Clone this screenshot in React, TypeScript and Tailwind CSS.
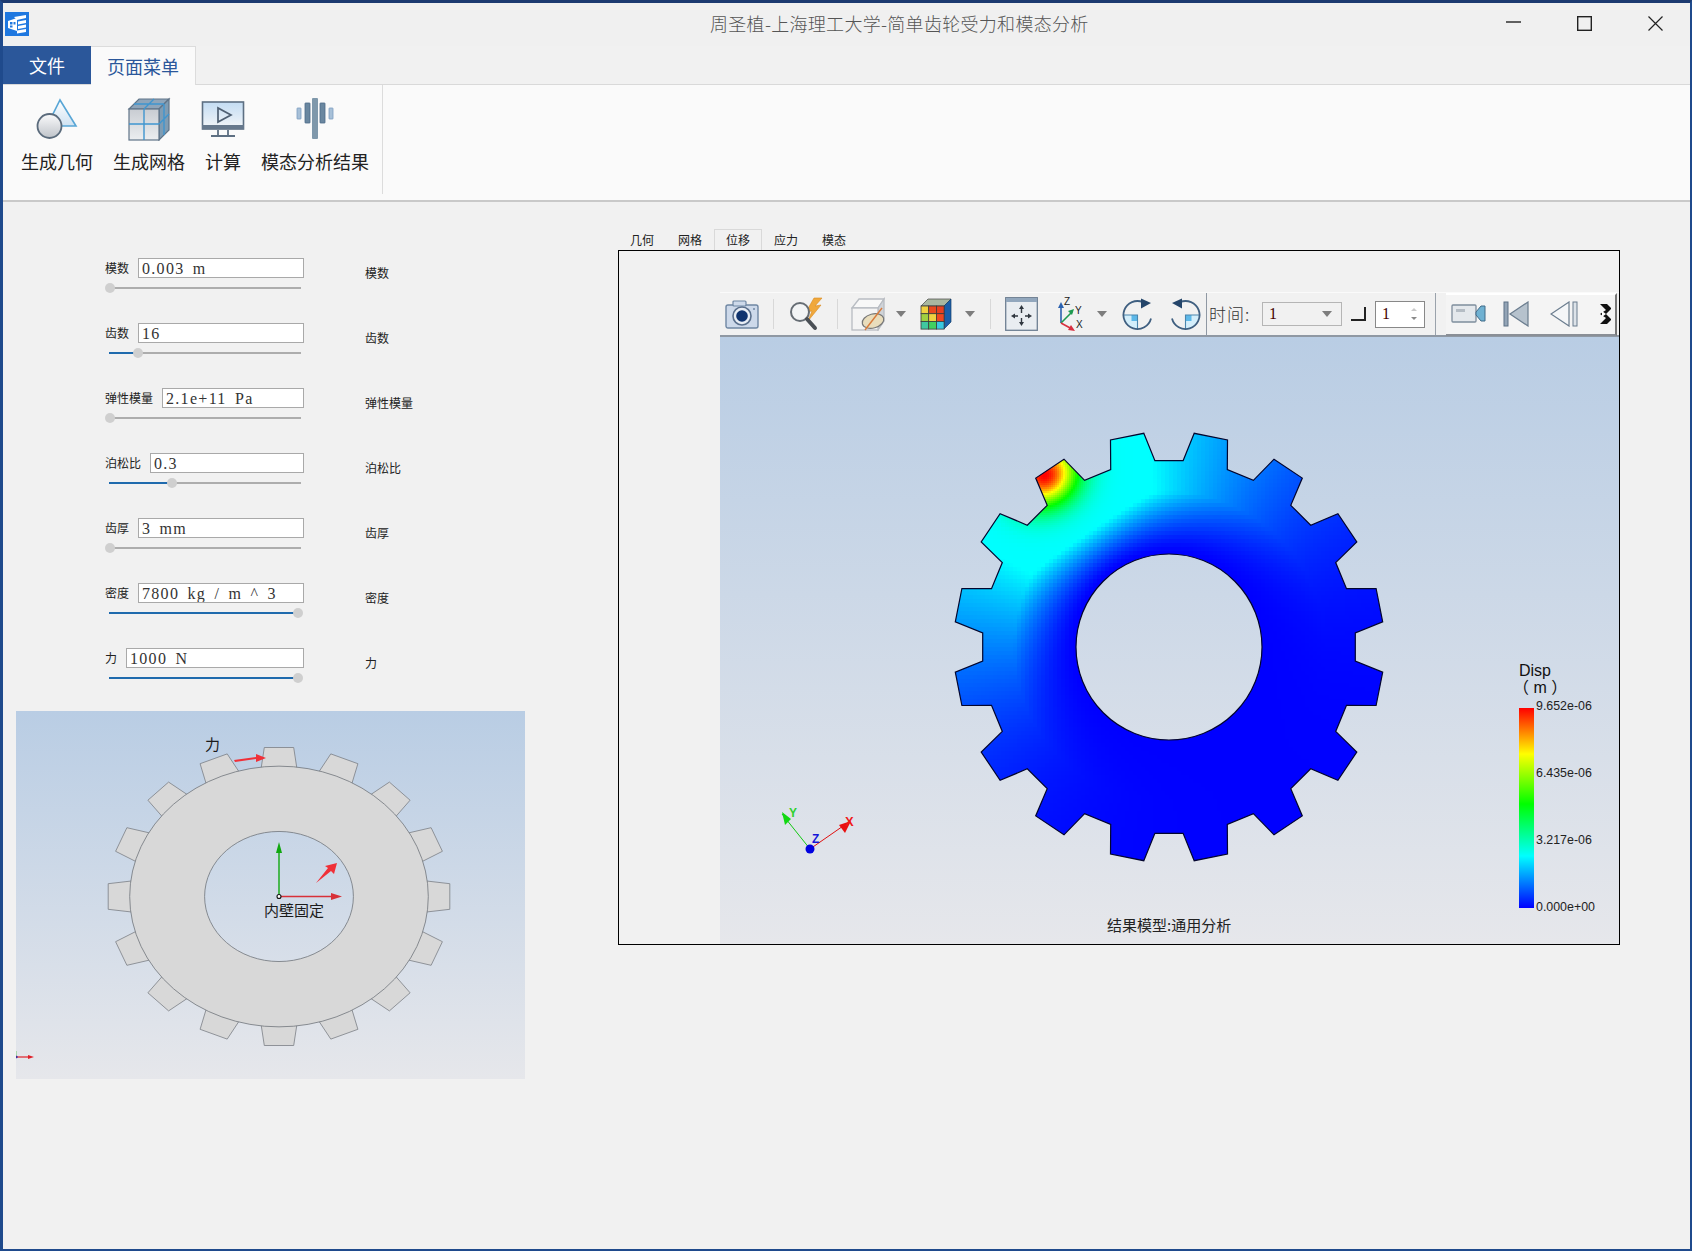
import React, { useMemo } from "react";

const clamp = (v: number, a: number, b: number) => Math.max(a, Math.min(b, v));
const STOPS: [number, number[]][] = [
  [0, [0, 0, 255]],
  [0.26, [0, 255, 255]],
  [0.52, [0, 255, 0]],
  [0.77, [255, 255, 0]],
  [1, [255, 0, 0]],
];
function jet(v: number) {
  const t = clamp(v, 0, 1);
  for (let i = 1; i < STOPS.length; i++) {
    if (t <= STOPS[i][0]) {
      const [a, ca] = STOPS[i - 1];
      const [b, cb] = STOPS[i];
      const k = (t - a) / (b - a);
      const c = ca.map((x, j) => Math.round(x + (cb[j] - x) * k));
      return `rgb(${c[0]},${c[1]},${c[2]})`;
    }
  }
  return "rgb(255,0,0)";
}
function field(dx: number, dy: number) {
  const r = Math.hypot(dx, dy);
  const ang = (Math.atan2(-dx, -dy) * 180) / Math.PI;
  let d = Math.abs(ang - 33.75);
  if (d > 180) d = 360 - d;
  const ring = 0.28 * Math.exp(-Math.pow(d / 65, 2)) + 0.1 * Math.exp(-Math.pow(d / 25, 2));
  const f = Math.pow(clamp((r - 95) / 60, 0, 1), 1.3);
  const base = Math.min(ring * f, 0.26);
  const a = dx * -0.556 + dy * -0.831;
  const b = dx * 0.831 + dy * -0.556;
  const hot = 0.74 * Math.exp(-Math.pow((a - 212) / 30, 2) - Math.pow((b + 8) / 34, 2));
  return base + hot;
}
function tooth(cx: number, cy: number, aDeg: number, rr: number, rt: number, hr: number, ht: number, sx = 1) {
  const a = (aDeg * Math.PI) / 180;
  const d = [Math.sin(a), -Math.cos(a)];
  const t = [Math.cos(a), Math.sin(a)];
  const p = (r: number, h: number) => [cx + (r * d[0] + h * t[0]) * sx, cy + r * d[1] + h * t[1]];
  return [p(rr, -hr), p(rt, -ht), p(rt, ht), p(rr, hr)];
}
const fmt = (p: number[]) => `${p[0].toFixed(1)} ${p[1].toFixed(1)}`;

function ResultGear() {
  const cx = 449;
  const cy = 310;
  const path = useMemo(() => {
    let d = "";
    for (let k = 0; k < 16; k++) {
      const pts = tooth(cx, cy, 11.25 + 22.5 * k, 185.5, 214.5, 22.5, 17);
      d += (k === 0 ? "M" : "L") + pts.map(fmt).join("L");
    }
    d += `Z M${cx + 93} ${cy} A93 93 0 1 0 ${cx - 93} ${cy} A93 93 0 1 0 ${cx + 93} ${cy}Z`;
    return d;
  }, []);
  const cells = useMemo(() => {
    const out: React.ReactElement[] = [];
    for (let x = -220; x < 220; x += 4) {
      for (let y = -220; y < 220; y += 4) {
        const rr = Math.hypot(x + 2, y + 2);
        if (rr < 86 || rr > 224) continue;
        const hot = Math.hypot(x + 118, y + 176) < 70;
        if (hot) {
          for (let i = 0; i < 2; i++)
            for (let j = 0; j < 2; j++) {
              const px = x + i * 2;
              const py = y + j * 2;
              out.push(<rect key={`${px},${py}`} x={cx + px} y={cy + py} width={2} height={2} fill={jet(field(px + 1, py + 1))} />);
            }
        } else {
          out.push(<rect key={`${x},${y}`} x={cx + x} y={cy + y} width={4} height={4} fill={jet(field(x + 2, y + 2))} />);
        }
      }
    }
    return out;
  }, []);
  return (
    <svg className="absolute inset-0" width={899} height={606} viewBox="0 0 899 606">
      <defs>
        <clipPath id="gearClip">
          <path d={path} clipRule="evenodd" />
        </clipPath>
        <linearGradient id="legend" x1="0" y1="0" x2="0" y2="1">
          <stop offset="0" stopColor="#ff0000" />
          <stop offset="0.23" stopColor="#ffff00" />
          <stop offset="0.48" stopColor="#00ff00" />
          <stop offset="0.74" stopColor="#00ffff" />
          <stop offset="1" stopColor="#0000ff" />
        </linearGradient>
      </defs>
      <g clipPath="url(#gearClip)" shapeRendering="crispEdges">
        {cells}
      </g>
      <path d={path} fill="none" stroke="#03052e" strokeWidth="1.2" fillRule="evenodd" />
      {/* triad */}
      <line x1="90" y1="512" x2="62" y2="477" stroke="#12c812" strokeWidth="1" />
      <polygon points="62,475 71,482 65,488" fill="#12d812" />
      <line x1="90" y1="512" x2="126" y2="487" stroke="#e01010" strokeWidth="1" />
      <polygon points="131,484 125,496 119,488" fill="#e81010" />
      <circle cx="90" cy="512" r="4.5" fill="#0000e0" />
      <text x="69" y="480" fontSize="12" fontWeight="700" fill="#30d030" fontFamily="Liberation Sans">Y</text>
      <text x="125" y="489" fontSize="13" fontWeight="700" fill="#f01818" fontFamily="Liberation Sans">X</text>
      <text x="92" y="506" fontSize="12" fontWeight="700" fill="#1515d8" fontFamily="Liberation Sans">Z</text>
      {/* legend */}
      <text x="799" y="339" fontSize="16" fill="#111" fontFamily="Liberation Sans">Disp</text>
      <text x="793" y="356" fontSize="16" fill="#111" fontFamily="Liberation Sans, Noto Sans CJK SC">（ m ）</text>
      <rect x="799" y="371" width="15" height="200" fill="url(#legend)" />
      <g fontSize="12.4" fill="#222" fontFamily="Liberation Sans">
        <text x="816" y="373">9.652e-06</text>
        <text x="816" y="440">6.435e-06</text>
        <text x="816" y="507">3.217e-06</text>
        <text x="816" y="574">0.000e+00</text>
      </g>
    </svg>
  );
}

function SketchGear() {
  const cx = 263;
  const cy = 185.5;
  const sx = 1.146;
  const teeth = useMemo(
    () =>
      Array.from({ length: 16 }, (_, k) =>
        tooth(cx, cy, 22.5 * k, 128, 149, 15.6, 12.8, sx).map((p) => p.map((n) => n.toFixed(1)).join(",")).join(" ")
      ),
    []
  );
  const ring = `M${cx + 149.3} ${cy}A149.3 130.3 0 1 0 ${cx - 149.3} ${cy}A149.3 130.3 0 1 0 ${cx + 149.3} ${cy}Z
  M${cx + 74.4} ${cy}A74.4 65 0 1 0 ${cx - 74.4} ${cy}A74.4 65 0 1 0 ${cx + 74.4} ${cy}Z`;
  return (
    <svg className="absolute inset-0" width={509} height={368} viewBox="0 0 509 368">
      {teeth.map((p, i) => (
        <polygon key={i} points={p} fill="#d8d8d8" stroke="#7b7f85" strokeWidth="0.8" />
      ))}
      <path d={ring} fill="#d8d8d8" fillRule="evenodd" stroke="#70757b" strokeWidth="0.8" />
      <polygon points="218,49 240,46 240,43 250,47 240,51 240,48 219,51" fill="#f03038" />
      <line x1="263" y1="185.5" x2="263" y2="136" stroke="#10a810" strokeWidth="1.4" />
      <polygon points="263,131 266,142 260,142" fill="#10a810" />
      <line x1="263" y1="185.5" x2="318" y2="185.5" stroke="#d83038" strokeWidth="1.4" />
      <polygon points="326,185.5 315,189 315,182" fill="#d83038" />
      <polygon points="300,172 312,157 309,155 321,152 318,163 315,160" fill="#f03038" />
      <circle cx="263" cy="185.5" r="2" fill="#fff" stroke="#111" strokeWidth="1.1" />
      <line x1="0" y1="346" x2="14" y2="346" stroke="#e02028" strokeWidth="1.2" />
      <polygon points="18,346 12,348 12,344" fill="#e02028" />
      <line x1="0.5" y1="340" x2="0.5" y2="345" stroke="#9bd49b" strokeWidth="0.8" />
      <circle cx="0.5" cy="346" r="1.2" fill="#4030a0" />
      <text x="189" y="39" fontSize="15" fill="#1b1b1b" fontFamily="Noto Sans CJK SC">力</text>
      <text x="248" y="205" fontSize="15" fill="#1b1b1b" fontFamily="Noto Sans CJK SC">内壁固定</text>
    </svg>
  );
}

function ShapeIcon() {
  return (
    <svg width="42" height="42" viewBox="0 0 42 42">
      <defs>
        <linearGradient id="sg" x1="0" y1="0" x2="0" y2="1">
          <stop offset="0" stopColor="#fbfbfc" />
          <stop offset="1" stopColor="#bfc3c9" />
        </linearGradient>
        <linearGradient id="tg" x1="0" y1="0" x2="0" y2="1">
          <stop offset="0" stopColor="#ffffff" />
          <stop offset="1" stopColor="#cfe2f2" />
        </linearGradient>
      </defs>
      <polygon points="24,2 40,28 11,28" fill="url(#tg)" stroke="#58a6d6" strokeWidth="1.6" />
      <circle cx="13.5" cy="28" r="12" fill="url(#sg)" stroke="#5b6b7c" strokeWidth="1.8" />
    </svg>
  );
}
function MeshIcon() {
  return (
    <svg width="44" height="44" viewBox="0 0 44 44">
      <defs>
        <linearGradient id="mg" x1="0" y1="0" x2="0" y2="1">
          <stop offset="0" stopColor="#c8ccd2" />
          <stop offset="1" stopColor="#eceef0" />
        </linearGradient>
      </defs>
      <polygon points="2,12 12,2 42,2 32,12" fill="#8ea5ba" stroke="#607488" strokeWidth="1.2" />
      <polygon points="32,12 42,2 42,33 32,43" fill="#7f9cb3" stroke="#607488" strokeWidth="1.2" />
      <rect x="2" y="12" width="30" height="31" fill="url(#mg)" stroke="#607488" strokeWidth="1.2" />
      <path d="M17 12V43M2 27H32M27 2L17 12M7 7H37M32 27L42 17M37 7V38" stroke="#3f95cf" strokeWidth="1.4" fill="none" />
    </svg>
  );
}
function MonitorIcon() {
  return (
    <svg width="44" height="44" viewBox="0 0 44 44" className="shrink-0">
      <defs>
        <linearGradient id="mon" x1="0" y1="0" x2="0" y2="1">
          <stop offset="0" stopColor="#c3dcf3" />
          <stop offset="1" stopColor="#f4f6f8" />
        </linearGradient>
      </defs>
      <rect x="1.5" y="5" width="41" height="27" fill="url(#mon)" stroke="#5d6f82" strokeWidth="1.6" />
      <rect x="1" y="28" width="42" height="4" fill="#66788c" />
      <polygon points="17,11 17,25 30,18" fill="none" stroke="#4e5f72" strokeWidth="1.7" />
      <path d="M17 33V38M27 33V38M10 39H34" stroke="#5d6f82" strokeWidth="1.8" fill="none" />
    </svg>
  );
}
function ModalIcon() {
  return (
    <svg width="38" height="44" viewBox="0 0 38 44">
      <rect x="16" y="1" width="6" height="41" rx="1" fill="#7f98ab" />
      <rect x="9" y="6" width="5" height="20" rx="0.5" fill="#6a87a0" stroke="#4d6a88" strokeWidth="0.8" />
      <rect x="24" y="6" width="5" height="20" rx="0.5" fill="#6a87a0" stroke="#4d6a88" strokeWidth="0.8" />
      <rect x="1" y="11" width="4" height="11" rx="0.5" fill="#a7c0d8" stroke="#7c9dc0" strokeWidth="0.8" />
      <rect x="33" y="11" width="4" height="11" rx="0.5" fill="#a7c0d8" stroke="#7c9dc0" strokeWidth="0.8" />
    </svg>
  );
}

function Caret({ className }: { className: string }) {
  return (
    <svg width="10" height="6" viewBox="0 0 10 6" className={className}>
      <polygon points="0,0 10,0 5,6" fill="#7d7d7d" />
    </svg>
  );
}
function Sep({ className }: { className: string }) {
  return <div className={`w-px h-[30px] bg-[#d8d8d8] shrink-0 ${className}`} />;
}

function CameraIcon() {
  return (
    <svg width="34" height="30" viewBox="0 0 34 30" className="ml-[5px] shrink-0">
      <rect x="1" y="6" width="32" height="23" rx="2" fill="#cdd9ea" stroke="#6f87a3" strokeWidth="1.4" />
      <rect x="8" y="2" width="13" height="5" rx="1" fill="#cdd9ea" stroke="#6f87a3" strokeWidth="1.2" />
      <circle cx="17" cy="17" r="9" fill="#e9eef5" stroke="#5a6f8c" strokeWidth="1.6" />
      <circle cx="17" cy="17" r="5.8" fill="#10336e" />
      <circle cx="29" cy="10" r="1" fill="#6f87a3" />
    </svg>
  );
}
function SearchBolt() {
  return (
    <svg width="36" height="34" viewBox="0 0 36 34" className="ml-[14px] shrink-0">
      <polygon points="26,1 18,15 24,14 20,24 33,8 27,9 34,1" fill="#f0a83c" stroke="#d88a20" strokeWidth="0.6" />
      <circle cx="12" cy="15" r="9" fill="#f2f4f5" stroke="#666d74" strokeWidth="2" />
      <line x1="19" y1="22" x2="27" y2="31" stroke="#4a4f55" strokeWidth="4" strokeLinecap="round" />
    </svg>
  );
}
function HideCube() {
  return (
    <svg width="35" height="34" viewBox="0 0 35 34" className="ml-[13px] shrink-0">
      <polygon points="1,11 8,2 33,2 27,11" fill="#f8f8f8" stroke="#b8bcc2" strokeWidth="1.3" />
      <polygon points="27,11 33,2 33,24 27,33" fill="#cfd3d8" stroke="#b8bcc2" strokeWidth="1.3" />
      <rect x="1" y="11" width="26" height="22" fill="#f4f4f4" stroke="#b8bcc2" strokeWidth="1.3" />
      <ellipse cx="22" cy="24" rx="11" ry="7" fill="#e9ddbc" stroke="#777" strokeWidth="1.2" transform="rotate(-15 22 24)" />
      <line x1="14" y1="33" x2="31" y2="11" stroke="#d87a3a" strokeWidth="1.4" />
    </svg>
  );
}
function ColorCube() {
  const cols = ["#f0d040", "#e84a20", "#e84020", "#a0d040", "#f0d040", "#f04820", "#40c8a0", "#40d060", "#38c8e0"];
  return (
    <svg width="32" height="32" viewBox="0 0 32 32" className="ml-[14px] shrink-0">
      <polygon points="1,8 8,1 31,1 24,8" fill="#a9b7a0" stroke="#444" strokeWidth="0.7" />
      <polygon points="24,8 31,1 31,24 24,31" fill="#1c5fa8" stroke="#15406c" strokeWidth="0.7" />
      {cols.map((c, i) => (
        <rect key={i} x={1 + (i % 3) * 7.7} y={8 + Math.floor(i / 3) * 7.7} width="7.7" height="7.7" fill={c} stroke="#3a3a3a" strokeWidth="0.8" />
      ))}
    </svg>
  );
}
function FitIcon() {
  return (
    <svg width="33" height="34" viewBox="0 0 33 34" className="ml-[14px] shrink-0">
      <rect x="0.7" y="0.7" width="31.6" height="32.6" fill="#e9edf1" stroke="#6e7f92" strokeWidth="1.3" />
      <rect x="1" y="1" width="31" height="4" fill="#92a7bd" />
      <path d="M16.5 11V16M16.5 21V27M8 19H13M20 19H25" stroke="#30373f" strokeWidth="1.4" />
      <polygon points="16.5,8 14,12 19,12" fill="#30373f" />
      <polygon points="16.5,29 14,25 19,25" fill="#30373f" />
      <polygon points="6,19 10,16.5 10,21.5" fill="#30373f" />
      <polygon points="27,19 23,16.5 23,21.5" fill="#30373f" />
    </svg>
  );
}
function AxesIcon() {
  return (
    <svg width="27" height="36" viewBox="0 0 27 36" className="ml-[19px] shrink-0">
      <line x1="4" y1="27" x2="4" y2="9" stroke="#2c62b0" strokeWidth="1.6" />
      <polygon points="4,6 1,12 7,12" fill="#2c62b0" />
      <line x1="4" y1="27" x2="15" y2="16" stroke="#1f9a50" strokeWidth="1.6" />
      <polygon points="17,13 11,15 15,19" fill="#1f9a50" />
      <line x1="4" y1="27" x2="15" y2="33" stroke="#d83040" strokeWidth="1.6" />
      <polygon points="18,35 11,34 14,29" fill="#d83040" />
      <g fontSize="10" fill="#222" fontFamily="Liberation Sans">
        <text x="7" y="9">Z</text>
        <text x="18" y="18">Y</text>
        <text x="19" y="32">X</text>
      </g>
    </svg>
  );
}
function RotateIcon({ flip, className }: { flip?: boolean; className: string }) {
  return (
    <svg width="31" height="32" viewBox="0 0 31 32" className={`${className} shrink-0`}>
      <g transform={flip ? "translate(31 0) scale(-1 1)" : undefined}>
        <path d="M15.5 17H1.5A14 14 0 0 0 15.5 31Z" fill="#d3eefb" />
        <rect x="9.5" y="17" width="6" height="6" fill="#5db8e8" />
        <path d="M1.5 17H15.5V31" fill="none" stroke="#4a86ad" strokeWidth="1.1" />
        <path d="M21 4.2A14 14 0 1 0 29 20.5" fill="none" stroke="#3f5f80" strokeWidth="1.8" />
        <polygon points="29,5 19,0.5 19,10.5" fill="#24456a" />
      </g>
    </svg>
  );
}
function VideoIcon() {
  return (
    <svg width="35" height="22" viewBox="0 0 35 22" className="ml-[5px] shrink-0">
      <rect x="1" y="2" width="24" height="17" rx="1" fill="#e4e8ec" stroke="#7e8d9c" strokeWidth="1.3" />
      <rect x="5" y="6" width="9" height="3" fill="#b4bcc4" />
      <polygon points="25,9 30,3 34,3 34,18 30,18 25,12" fill="#6fb1d2" stroke="#406a88" strokeWidth="1" />
    </svg>
  );
}
function FirstIcon() {
  return (
    <svg width="26" height="26" viewBox="0 0 26 26" className="ml-[17px] shrink-0">
      <rect x="1" y="1" width="4" height="24" fill="#93a4b6" stroke="#5c7085" strokeWidth="1" />
      <polygon points="25,1 7,13 25,25" fill="#b6c2cd" stroke="#6a7c8e" strokeWidth="1.2" />
    </svg>
  );
}
function PrevIcon() {
  return (
    <svg width="28" height="26" viewBox="0 0 28 26" className="ml-[21px] shrink-0">
      <polygon points="19,1 1,13 19,25" fill="#f4f6f8" stroke="#6a7c8e" strokeWidth="1.2" />
      <rect x="23" y="1" width="4" height="24" fill="#dde3e9" stroke="#6a7c8e" strokeWidth="1" />
    </svg>
  );
}
function NextCut() {
  return (
    <svg width="17" height="24" viewBox="0 0 17 24" className="ml-[21px] shrink-0">
      <path d="M1 2L8 2L12 6V7L7 12L12 17V18L8 22H1L7 16L1 12L7 8Z" fill="#111" />
      <path d="M3 9L7 12L3 15Z" fill="#fff" />
    </svg>
  );
}

const ROWS = [
  { label: "模数", value: "0.003 m", pct: -1 },
  { label: "齿数", value: "16", pct: 138 },
  { label: "弹性模量", value: "2.1e+11 Pa", pct: -1 },
  { label: "泊松比", value: "0.3", pct: 172 },
  { label: "齿厚", value: "3 mm", pct: -1 },
  { label: "密度", value: "7800 kg / m ^ 3", pct: 298 },
  { label: "力", value: "1000 N", pct: 298 },
];

function FormRow({ label, value, pct }: { label: string; value: string; pct: number }) {
  const thumb = pct < 0 ? 1 : pct - 109;
  return (
    <div className="flex items-start h-[65px]">
      <div className="w-[199px] shrink-0">
        <div className="flex items-center h-[20px] gap-[9px]">
          <span className="text-[12px] leading-[20px] text-[#222] whitespace-nowrap">{label}</span>
          <input
            readOnly
            value={value}
            className="flex-1 min-w-0 h-[20px] border border-[#a9a9a9] bg-white px-[3px] pt-[2px] text-[16px] leading-[18px] tracking-[1.3px] [word-spacing:3px] text-[#333] font-['Liberation_Serif','Noto_Sans_CJK_SC',serif] outline-none"
          />
        </div>
        <div className="relative ml-[4px] w-[192px] h-[10px] mt-[5px] flex items-center">
          <div className="w-full h-[2px] bg-[#adadad]" />
          {pct > 0 && <div className="absolute left-0 top-[4px] h-[2px] bg-[#1f6aad]" style={{ width: thumb }} />}
          <div className="absolute top-0 w-[10px] h-[10px] rounded-full bg-[#cfcfcf]" style={{ left: thumb - 5 }} />
        </div>
      </div>
      <span className="ml-[61px] mt-[5px] text-[12px] leading-[20px] text-[#222] whitespace-nowrap">{label}</span>
    </div>
  );
}

function Ribbon() {
  const items: [string, string, React.ReactNode][] = [
    ["生成几何", "w-[72px]", <ShapeIcon />],
    ["生成网格", "w-[72px]", <MeshIcon />],
    ["计算", "w-[36px]", <MonitorIcon />],
    ["模态分析结果", "w-[108px]", <ModalIcon />],
  ];
  return (
    <div className="h-[117px] bg-[#fafafa] flex border-b-2 border-[#c9c9c9] shrink-0">
      <div className="flex gap-[20px] pl-[18px] pt-[9px] w-[380px] h-[109px] border-r border-[#dcdcdc]">
        {items.map(([t, w, ic]) => (
          <div key={t} className={`flex flex-col items-center ${w}`}>
            <div className="h-[50px] flex items-center justify-center">{ic}</div>
            <span className="mt-[4px] text-[18px] leading-[26px] text-[#222] whitespace-nowrap">{t}</span>
          </div>
        ))}
      </div>
    </div>
  );
}

function Toolbar() {
  return (
    <div className="h-[45px] bg-[#f1f1f1] border-t border-[#fafafa] border-b-2 border-b-[#8f98a3] flex items-center shrink-0">
      <CameraIcon />
      <Sep className="ml-[14px]" />
      <SearchBolt />
      <Sep className="ml-[13px]" />
      <HideCube />
      <Caret className="ml-[10px] shrink-0" />
      <ColorCube />
      <Caret className="ml-[13px] shrink-0" />
      <Sep className="ml-[15px]" />
      <FitIcon />
      <AxesIcon />
      <Caret className="ml-[13px] shrink-0" />
      <RotateIcon className="ml-[15px]" />
      <RotateIcon flip className="ml-[17px]" />
      <div className="w-px h-full bg-[#8f98a3] ml-[5px] shrink-0" />
      <span className="ml-[2px] text-[17px] text-[#333] whitespace-nowrap tracking-[1px] font-light w-[53px] shrink-0">时间:</span>
      <div className="w-[80px] h-[24px] border border-[#b5b5b5] flex items-center justify-between px-[6px] bg-[#f1f1f1] shrink-0 font-['Liberation_Serif',serif] text-[16px] text-[#400]">
        <span>1</span>
        <Caret className="mr-[3px]" />
      </div>
      <div className="ml-[9px] w-[15px] h-[14px] border-r-2 border-b-2 border-[#222] shrink-0" />
      <div className="ml-[9px] w-[50px] h-[27px] border border-[#888] bg-white flex items-center justify-between px-[6px] shrink-0 font-['Liberation_Serif',serif] text-[16px] text-[#400]">
        <span>1</span>
        <svg width="8" height="14" viewBox="0 0 8 14">
          <polygon points="4,1 7,4 1,4" fill="#c9c9c9" />
          <polygon points="4,13 7,10 1,10" fill="#8a8a8a" />
        </svg>
      </div>
      <div className="w-px h-full bg-[#9aa2ab] ml-[10px] shrink-0" />
      <div className="ml-[10px] w-[171px] h-[43px] bg-[#f4f4f4] border-t-2 border-white border-b-2 border-b-[#8a8f96] border-r-2 border-r-[#777] flex items-center shrink-0 overflow-hidden">
        <VideoIcon />
        <FirstIcon />
        <PrevIcon />
        <NextCut />
      </div>
    </div>
  );
}

export default function App() {
  return (
    <div className="w-[1692px] h-[1251px] flex flex-col bg-[#f1f1f1] border-t-[3px] border-t-[#1c3a70] border-l-[3px] border-l-[#1f4a8c] border-r-2 border-r-[#1f4a8c] border-b-2 border-b-[#1f4a8c] overflow-hidden font-['Noto_Sans_CJK_SC','Liberation_Sans',sans-serif]">
      {/* Title bar */}
      <div className="h-[43px] shrink-0 flex items-start bg-[#f0f0f0]">
        <svg width="24" height="24" viewBox="0 0 24 24" className="ml-[2px] mt-[9px] shrink-0">
          <rect width="24" height="24" fill="#1f78e0" />
          <path d="M3 9L12 6V19L3 16Z" fill="#ffffff" />
          <path d="M5 10H7.5V12.5H5ZM8.5 10H10.5V12.5H8.5ZM5 13.5H7.5V15.5H5Z" fill="#1f78e0" />
          <path d="M9 5L21 3V6L12 8ZM13 9.5L21 8V11L13 12.5ZM13 14L21 12.5V15.5L13 17ZM12 18.5L21 17V20L12 21.5Z" fill="#ffffff" />
        </svg>
        <span className="ml-[681px] mt-[7px] text-[18px] leading-[26px] tracking-[0.3px] text-[#555] font-light whitespace-nowrap">周圣植-上海理工大学-简单齿轮受力和模态分析</span>
        <div className="ml-auto flex gap-[56px] mt-[13px] mr-[27px] text-[#222]">
          <svg width="15" height="15" viewBox="0 0 15 15">
            <line x1="0" y1="6" x2="15" y2="6" stroke="#222" strokeWidth="1.4" />
          </svg>
          <svg width="15" height="15" viewBox="0 0 15 15">
            <rect x="0.7" y="0.7" width="13.6" height="13.6" fill="none" stroke="#222" strokeWidth="1.4" />
          </svg>
          <svg width="15" height="15" viewBox="0 0 15 15">
            <path d="M0.5 0.5L14.5 14.5M14.5 0.5L0.5 14.5" stroke="#222" strokeWidth="1.2" />
          </svg>
        </div>
      </div>

      {/* Ribbon tabs */}
      <div className="h-[39px] shrink-0 flex border-b border-[#d9d9d9]">
        <div className="w-[88px] h-[38px] bg-[#2b579a] text-white text-[18px] flex items-center justify-center">文件</div>
        <div className="w-[105px] h-[39px] bg-[#fafafa] border-t border-r border-[#dcdcdc] text-[#2b579a] text-[18px] flex items-center justify-center">页面菜单</div>
      </div>
      <Ribbon />

      {/* Content */}
      <div className="flex-1 flex min-h-0">
        <div className="w-[615px] shrink-0">
          <div className="ml-[102px] mt-[56px] h-[453px]">
            {ROWS.map((r) => (
              <FormRow key={r.label} {...r} />
            ))}
          </div>
          <div className="relative ml-[13px] w-[509px] h-[368px] bg-gradient-to-b from-[#b9cde4] to-[#e6e7eb]">
            <SketchGear />
          </div>
        </div>

        <div className="w-[1002px] shrink-0 pt-[27px]">
          <div className="flex h-[21px] text-[12px] text-[#222]">
            {["几何", "网格", "位移", "应力", "模态"].map((t, i) => (
              <div
                key={t}
                className={
                  i === 2
                    ? "w-[48px] h-[21px] flex items-center justify-center border border-b-0 border-[#d9d9d9] bg-[#f1f1f1]"
                    : "w-[48px] h-[21px] flex items-center justify-center"
                }
              >
                {t}
              </div>
            ))}
          </div>
          <div className="h-[695px] border border-black pt-[41px] pl-[101px] flex flex-col">
            <Toolbar />
            <div className="relative w-[899px] flex-1 bg-gradient-to-b from-[#b9cde4] to-[#e6e7eb]">
              <ResultGear />
              <span className="absolute left-[387px] top-[578px] text-[15px] leading-[20px] text-[#222] whitespace-nowrap">结果模型:通用分析</span>
            </div>
          </div>
        </div>
      </div>
    </div>
  );
}
